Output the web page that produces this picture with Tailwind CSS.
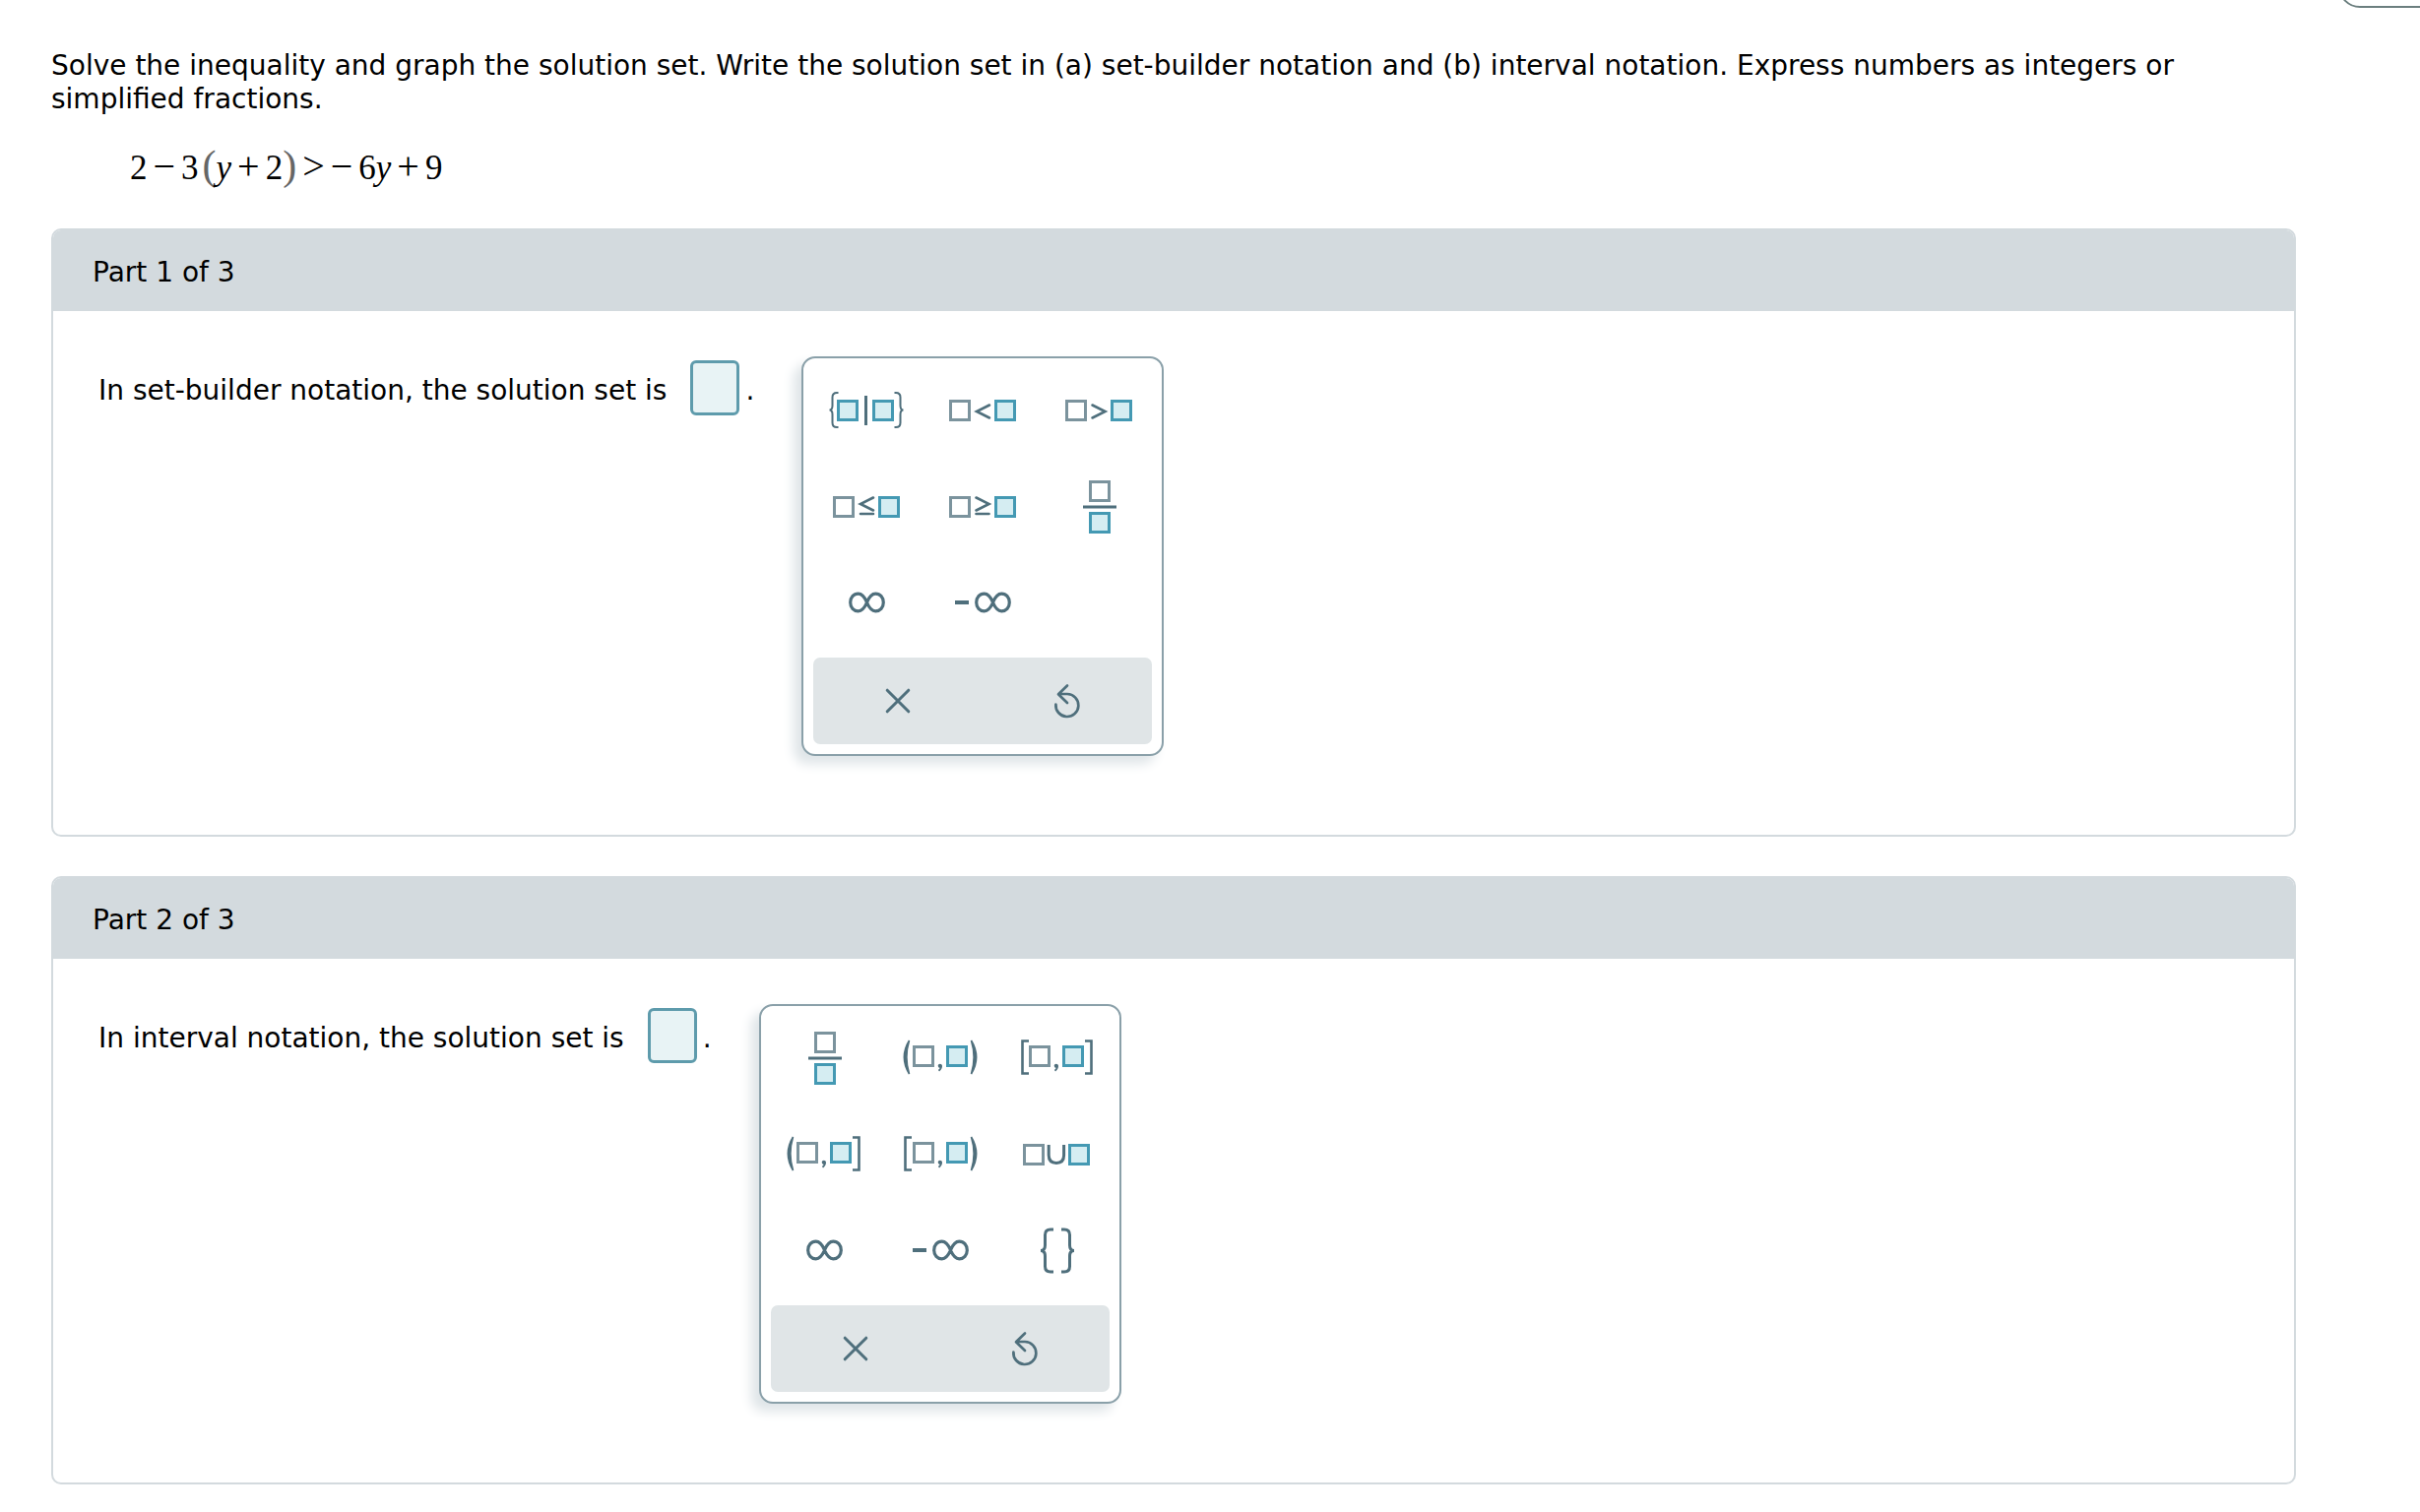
<!DOCTYPE html>
<html lang="en">
<head>
<meta charset="utf-8">
<meta name="viewport" content="width=device-width, initial-scale=1">
<title>Solve the inequality</title>
<script src="https://cdn.jsdelivr.net/npm/@tailwindcss/browser@4"></script>
</head>
<body class="relative min-h-screen overflow-x-hidden bg-white font-['DejaVu_Sans',sans-serif] text-[28px] leading-[34px] text-black">

<!-- Shared icon parts -->
<svg class="hidden" aria-hidden="true">
  <symbol id="empty" viewBox="0 0 22 22"><rect x="1.5" y="1.5" width="19" height="19" fill="#fff" stroke="#7b939d" stroke-width="3"/></symbol>
  <symbol id="filled" viewBox="0 0 22 22"><rect x="1.5" y="1.5" width="19" height="19" fill="#d5edf2" stroke="#4499b3" stroke-width="3"/></symbol>
  <symbol id="infinity" viewBox="0 0 38 22"><path d="M19 11C16.5 5 14 2.200 10.200 2.200C5.500 2.200 2.200 5.800 2.200 11S5.500 19.800 10.200 19.800C14 19.800 16.500 17 19 11C21.500 5 24 2.200 27.800 2.200C32.500 2.200 35.800 5.800 35.800 11S32.500 19.800 27.800 19.800C24 19.800 21.500 17 19 11Z" fill="none" stroke="#4f6f7c" stroke-width="3.200"/></symbol>
  <symbol id="lparen" viewBox="0 0 10 36"><path d="M7.500 1Q-2.800 18 7.500 35Q2.200 18 7.500 1Z" fill="#4f6f7c" stroke="#4f6f7c" stroke-width="1.600"/></symbol>
  <symbol id="rparen" viewBox="0 0 10 36"><path d="M2.500 1Q12.800 18 2.500 35Q7.800 18 2.500 1Z" fill="#4f6f7c" stroke="#4f6f7c" stroke-width="1.600"/></symbol>
  <symbol id="lbracket" viewBox="0 0 8 36"><path d="M8 1.500H1.500V34.500H8" fill="none" stroke="#4f6f7c" stroke-width="2.600"/></symbol>
  <symbol id="rbracket" viewBox="0 0 8 36"><path d="M0 1.500H6.500V34.500H0" fill="none" stroke="#4f6f7c" stroke-width="2.600"/></symbol>
  <symbol id="pair" viewBox="0 0 118 98">
    <use href="#empty" x="31" y="37" width="22" height="22"/><use href="#filled" x="65" y="37" width="22" height="22"/>
    <circle cx="58.800" cy="57.800" r="2.100" fill="#4f6f7c"/><path d="M59.900 57.500Q60.500 60.500 57.500 62.700" fill="none" stroke="#4f6f7c" stroke-width="1.800"/>
  </symbol>
  <symbol id="relation" viewBox="0 0 118 98"><use href="#empty" x="25" y="39" width="22" height="22"/><use href="#filled" x="71" y="39" width="22" height="22"/></symbol>
  <symbol id="fraction" viewBox="0 0 118 98"><use href="#empty" x="49" y="23" width="22" height="22"/><path d="M43 50H77" stroke="#4f6f7c" stroke-width="3.200"/><use href="#filled" x="49" y="55" width="22" height="22"/></symbol>
  <symbol id="clear" viewBox="0 0 40 40"><path d="M9.200 9.200L30.800 30.800M30.800 9.200L9.200 30.800" fill="none" stroke="#4f6f7c" stroke-width="3" stroke-linecap="round"/></symbol>
  <symbol id="undo" viewBox="0 0 40 40"><path d="M20 4.500L11 13.300L20 22M11.500 13H20A11.500 11.500 0 1 1 8.400 23.500" fill="none" stroke="#4f6f7c" stroke-width="2.700" stroke-linecap="round" stroke-linejoin="round"/></symbol>
</svg>

<button type="button" aria-label="Menu" class="absolute -top-18 -right-5 h-20 w-[103px] rounded-[22px] border-2 border-[#6b7f7f]"></button>

<main class="flex flex-col pt-[50px] pr-[126px] pb-7 pl-[52px]">
  <p>Solve the inequality and graph the solution set. Write the solution set in (a) set-builder notation and (b) interval notation. Express numbers as integers or simplified fractions.</p>

  <div class="mt-[26px] ml-20 flex h-12 items-baseline font-['Liberation_Serif',serif] text-[35px] leading-[48px]">
    <span>2</span><span class="mx-[6px] text-[40px]">−</span><span>3</span><span class="ml-1 text-[42px] text-[#666]">(</span><i>y</i><span class="mx-[6px] text-[40px]">+</span><span>2</span><span class="text-[42px] text-[#666]">)</span><span class="mx-[6px] text-[40px]">&gt;</span><span class="mr-[6px] text-[40px]">−</span><span>6</span><i>y</i><span class="mx-[6px] text-[40px]">+</span><span>9</span>
  </div>

  <section class="mt-10 rounded-[10px] border-2 border-[#d3dade]">
    <h2 class="rounded-t-lg bg-[#d3dade] px-10 pt-[26px] pb-[22px]">Part 1 of 3</h2>
    <div class="flex items-start pt-[46px] pb-20 pl-[46px]">
      <div class="flex h-16 items-center">
        <label for="set-builder" class="pt-[6px]">In set-builder notation, the solution set is</label>
        <input id="set-builder" type="text" class="mr-[6px] ml-6 h-14 w-[50px] rounded-md border-3 border-[#5e9bac] bg-[#e8f3f5] px-2">
        <span class="pt-[6px]">.</span>
      </div>
      <div class="ml-12 w-[368px] rounded-[14px] border-2 border-[#8aa0a9] bg-white pt-[3px] pb-[10px] shadow-[-8px_8px_12px_#dfe5e8]">
        <div class="grid grid-cols-3 px-[5px]">
          <button type="button" aria-label="Set-builder"><svg class="h-[98px] w-full" viewBox="0 0 118 98"><use href="#filled" x="29" y="39" width="22" height="22"/><use href="#filled" x="65" y="39" width="22" height="22"/><path d="M58.500 35V65" stroke="#4f6f7c" stroke-width="3"/><path d="M30.500 32H29Q24.500 32 24.500 36.500V45Q24.500 49.500 21.500 49.500Q24.500 49.500 24.500 54V62.500Q24.500 67 29 67H30.500M87.500 32H89Q93.500 32 93.500 36.500V45Q93.500 49.500 96.500 49.500Q93.500 49.500 93.500 54V62.500Q93.500 67 89 67H87.500" fill="none" stroke="#4f6f7c" stroke-width="2"/></svg></button>
          <button type="button" aria-label="Less than"><svg class="h-[98px] w-full" viewBox="0 0 118 98"><use href="#relation"/><path d="M66 44.500L53 51L66 57.500" fill="none" stroke="#4f6f7c" stroke-width="2.600" stroke-linecap="round"/></svg></button>
          <button type="button" aria-label="Greater than"><svg class="h-[98px] w-full" viewBox="0 0 118 98"><use href="#relation"/><path d="M52.500 44.500L65.500 51L52.500 57.500" fill="none" stroke="#4f6f7c" stroke-width="2.600" stroke-linecap="round"/></svg></button>
          <button type="button" aria-label="Less than or equal"><svg class="h-[98px] w-full" viewBox="0 0 118 98"><use href="#relation"/><path d="M66 40.500L53 47L66 53.500M53 57H66" fill="none" stroke="#4f6f7c" stroke-width="2.600" stroke-linecap="round"/></svg></button>
          <button type="button" aria-label="Greater than or equal"><svg class="h-[98px] w-full" viewBox="0 0 118 98"><use href="#relation"/><path d="M52.500 40.500L65.500 47L52.500 53.500M52.500 57H65.500" fill="none" stroke="#4f6f7c" stroke-width="2.600" stroke-linecap="round"/></svg></button>
          <button type="button" aria-label="Fraction"><svg class="h-[98px] w-full" viewBox="0 0 118 98"><use href="#fraction"/></svg></button>
          <button type="button" aria-label="Infinity"><svg class="h-[98px] w-full" viewBox="0 0 118 98"><use href="#infinity" x="40.500" y="38" width="38" height="22"/></svg></button>
          <button type="button" aria-label="Negative infinity"><svg class="h-[98px] w-full" viewBox="0 0 118 98"><path d="M31 49H45" stroke="#4f6f7c" stroke-width="4"/><use href="#infinity" x="50.500" y="38" width="38" height="22"/></svg></button>
        </div>
        <div class="mx-[10px] mt-[7px] grid h-[88px] grid-cols-2 rounded-[7px] bg-[#e0e5e7]">
          <button type="button" aria-label="Clear" class="flex items-center justify-center"><svg class="size-10"><use href="#clear"/></svg></button>
          <button type="button" aria-label="Undo" class="flex items-center justify-center"><svg class="size-10"><use href="#undo"/></svg></button>
        </div>
      </div>
    </div>
  </section>

  <section class="mt-10 rounded-[10px] border-2 border-[#d3dade]">
    <h2 class="rounded-t-lg bg-[#d3dade] px-10 pt-[26px] pb-[22px]">Part 2 of 3</h2>
    <div class="flex items-start pt-[46px] pb-20 pl-[46px]">
      <div class="flex h-16 items-center">
        <label for="interval" class="pt-[6px]">In interval notation, the solution set is</label>
        <input id="interval" type="text" class="mr-[6px] ml-6 h-14 w-[50px] rounded-md border-3 border-[#5e9bac] bg-[#e8f3f5] px-2">
        <span class="pt-[6px]">.</span>
      </div>
      <div class="ml-12 w-[368px] rounded-[14px] border-2 border-[#8aa0a9] bg-white pt-[3px] pb-[10px] shadow-[-8px_8px_12px_#dfe5e8]">
        <div class="grid grid-cols-3 px-[5px]">
          <button type="button" aria-label="Fraction"><svg class="h-[98px] w-full" viewBox="0 0 118 98"><use href="#fraction"/></svg></button>
          <button type="button" aria-label="Open interval"><svg class="h-[98px] w-full" viewBox="0 0 118 98"><use href="#lparen" x="20" y="31" width="10" height="36"/><use href="#pair"/><use href="#rparen" x="88" y="31" width="10" height="36"/></svg></button>
          <button type="button" aria-label="Closed interval"><svg class="h-[98px] w-full" viewBox="0 0 118 98"><use href="#lbracket" x="23" y="31" width="8" height="36"/><use href="#pair"/><use href="#rbracket" x="88" y="31" width="8" height="36"/></svg></button>
          <button type="button" aria-label="Left-open interval"><svg class="h-[98px] w-full" viewBox="0 0 118 98"><use href="#lparen" x="20" y="31" width="10" height="36"/><use href="#pair"/><use href="#rbracket" x="88" y="31" width="8" height="36"/></svg></button>
          <button type="button" aria-label="Right-open interval"><svg class="h-[98px] w-full" viewBox="0 0 118 98"><use href="#lbracket" x="22" y="31" width="8" height="36"/><use href="#pair"/><use href="#rparen" x="88" y="31" width="10" height="36"/></svg></button>
          <button type="button" aria-label="Union"><svg class="h-[98px] w-full" viewBox="0 0 118 98"><use href="#relation"/><path d="M51.200 40V50.500C51.200 55.800 54 58.400 59 58.400S66.600 55.800 66.600 50.500V40" fill="none" stroke="#4f6f7c" stroke-width="3"/></svg></button>
          <button type="button" aria-label="Infinity"><svg class="h-[98px] w-full" viewBox="0 0 118 98"><use href="#infinity" x="40.500" y="38" width="38" height="22"/></svg></button>
          <button type="button" aria-label="Negative infinity"><svg class="h-[98px] w-full" viewBox="0 0 118 98"><path d="M31 49H45" stroke="#4f6f7c" stroke-width="4"/><use href="#infinity" x="50.500" y="38" width="38" height="22"/></svg></button>
          <button type="button" aria-label="Set braces"><svg class="h-[98px] w-full" viewBox="0 0 118 98"><path d="M56 28H53Q47.500 28 47.500 33.500V44Q47.500 49.500 43 49.500Q47.500 49.500 47.500 55V65.500Q47.500 71 53 71H56M64 28H67Q72.500 28 72.500 33.500V44Q72.500 49.500 77 49.500Q72.500 49.500 72.500 55V65.500Q72.500 71 67 71H64" fill="none" stroke="#4f6f7c" stroke-width="3"/></svg></button>
        </div>
        <div class="mx-[10px] mt-[7px] grid h-[88px] grid-cols-2 rounded-[7px] bg-[#e0e5e7]">
          <button type="button" aria-label="Clear" class="flex items-center justify-center"><svg class="size-10"><use href="#clear"/></svg></button>
          <button type="button" aria-label="Undo" class="flex items-center justify-center"><svg class="size-10"><use href="#undo"/></svg></button>
        </div>
      </div>
    </div>
  </section>
</main>
</body>
</html>
